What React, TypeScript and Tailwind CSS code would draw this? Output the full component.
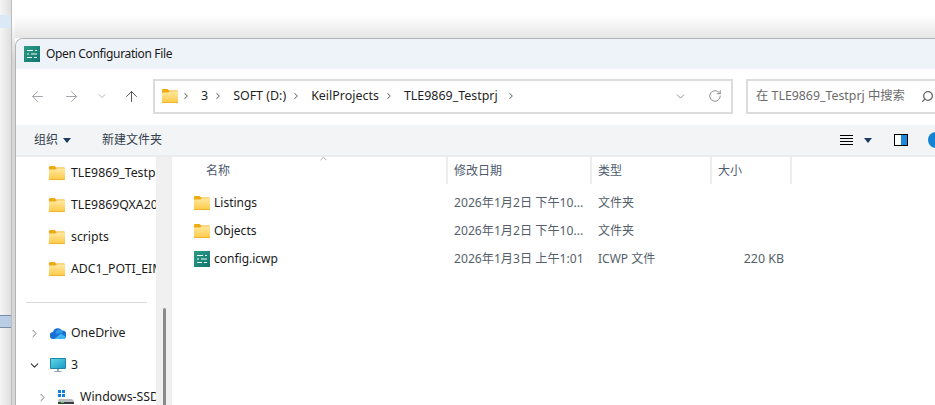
import React from "react";
import { ArrowLeft, ArrowRight, ArrowUp, ChevronDown, ChevronRight, ChevronUp, RotateCw, Search } from "lucide-react";

const font = "font-['Noto_Sans','Noto_Sans_CJK_SC',sans-serif]";

function Folder() {
  return (
    <svg width="16" height="14" viewBox="0 0 16 14" className="shrink-0">
      <defs>
        <linearGradient id="folderBody" x1="0" y1="0" x2="0" y2="1">
          <stop offset="0" stopColor="#ffe9a3" />
          <stop offset="1" stopColor="#fcc945" />
        </linearGradient>
      </defs>
      <path d="M0 1a1 1 0 0 1 1-1h4.5l1.7 1.6H15a1 1 0 0 1 1 1V5H0z" fill="#f0ab14" />
      <path d="M0 3.4h6.3l1.6-1.2H16V14H1a1 1 0 0 1-1-1z" fill="url(#folderBody)" />
      <rect x="0" y="13" width="16" height="1" fill="#f2b32a" />
    </svg>
  );
}

function AppIcon({ size = 16 }: { size?: number }) {
  return (
    <svg width={size} height={size} viewBox="0 0 16 16" className="shrink-0">
      <defs>
        <linearGradient id="appBg" x1="0" y1="0" x2="1" y2="1">
          <stop offset="0" stopColor="#2c9c86" />
          <stop offset="1" stopColor="#12756f" />
        </linearGradient>
      </defs>
      <rect width="16" height="16" fill="url(#appBg)" />
      <path d="M3 4.5h6M11 4.5h2M3 8h2M7 8h6M3 11.5h5M10 11.5h3" stroke="#eef8f5" strokeWidth="1" />
    </svg>
  );
}

function Crumb({ lead = 5 }: { lead?: number }) {
  return (
    <ChevronRight
      size={10}
      strokeWidth={2.5}
      className={`text-[#6f6f6f] shrink-0 mr-[10px] ${lead === 3 ? "ml-[3px]" : lead === 8 ? "ml-[8px]" : "ml-[5px]"}`}
    />
  );
}

function SideFolder({ label }: { label: string }) {
  return (
    <div className="h-8 flex items-center gap-[6px] pl-[33px] whitespace-nowrap overflow-hidden text-[12.3px]">
      <Folder />
      <span>{label}</span>
    </div>
  );
}

function FileRow({ icon, name, date, type, size }: { icon: React.ReactNode; name: string; date: string; type: string; size?: string }) {
  return (
    <div className="h-7 flex items-center whitespace-nowrap">
      <div className="w-[275px] flex items-center gap-1 pl-[19px] text-[#1a1a1a]">
        {icon}
        <span>{name}</span>
      </div>
      <div className="w-[144px] text-[#555f6b] pl-[4px] text-[12.15px]">{date}</div>
      <div className="w-[120px] text-[#555f6b] pl-[4px]">{type}</div>
      <div className="w-[70px] text-right text-[#555f6b] text-[12.4px]">{size}</div>
    </div>
  );
}

function Head({ label, className }: { label: string; className: string }) {
  return (
    <div className={`h-[27px] flex items-center pl-[6px] border-r-2 border-[#ececec] text-[#4d5b6e] ${className}`}>{label}</div>
  );
}

export default function App() {
  return (
    <div className={`${font} w-[935px] h-[405px] overflow-hidden text-[12px] text-[#1a1a1a] flex bg-white`}>
      <div className="w-3 h-full shrink-0 flex flex-col bg-gradient-to-r from-[#f5f5f5] to-[#dfdfdf] border-r border-[#bdbdbd]">
        <div className="h-[15px]" />
        <div className="h-[13px] bg-[#dbe8f5]" />
        <div className="h-[287px]" />
        <div className="h-[13px] bg-[#b9cde4] border-y border-[#7c8ea3]" />
      </div>
      <div className="w-[3px] h-full shrink-0 bg-gradient-to-b from-white from-[5%] to-[#d6d6d6] to-[15%]" />
      <div className="flex-1 min-w-0 flex flex-col">
        <div className="h-[38px] shrink-0 bg-gradient-to-b from-white from-[40%] to-[#e6e6e6]" />
        <div className="flex-1 min-h-0 rounded-tl-lg border-l border-t border-[#b4b4b4] bg-white overflow-hidden flex flex-col">
          <div className="h-[30px] shrink-0 bg-[#eef3fa] flex items-center pl-2 gap-[6px] tracking-[-0.35px]">
            <AppIcon />
            <span>Open Configuration File</span>
          </div>

          <div className="h-[56px] shrink-0 flex items-center pl-[13px] pb-[2px]">
            <div className="flex items-center w-[110px] shrink-0 text-[#a2a6aa]">
              <ArrowLeft size={17} strokeWidth={1.4} className="shrink-0" />
              <ArrowRight size={17} strokeWidth={1.4} className="ml-[17px] shrink-0" />
              <ChevronDown size={12} strokeWidth={1.6} className="ml-[16px] shrink-0" />
              <ArrowUp size={17} strokeWidth={1.4} className="ml-[15px] shrink-0 text-[#555]" />
            </div>
            <div className="w-[580px] ml-[14px] shrink-0 h-[35px] border-2 border-[#dcdcdc] flex items-center pl-[7px] pr-[9px] text-[12.45px] text-[#1f1f1f] whitespace-nowrap">
              <Folder />
              <Crumb lead={3} />
              <span>3</span>
              <Crumb />
              <span>SOFT (D:)</span>
              <Crumb />
              <span>KeilProjects</span>
              <Crumb />
              <span>TLE9869_Testprj</span>
              <Crumb lead={8} />
              <ChevronDown size={13} strokeWidth={1.4} className="ml-auto mr-[21px] text-[#6f6f6f]" />
              <RotateCw size={14} strokeWidth={1.4} className="text-[#777]" />
            </div>
            <div className="flex-1 min-w-0 ml-[13px] h-[35px] border-y-2 border-l-2 border-[#dcdcdc] flex items-center pl-[8px] text-[12.35px] text-[#6b6b6b] gap-[16px] whitespace-nowrap overflow-hidden">
              <span>在 TLE9869_Testprj 中搜索</span>
              <Search size={13} strokeWidth={2.4} className="text-[#666] -scale-x-100 shrink-0" />
            </div>
          </div>

          <div className="h-[32px] shrink-0 bg-[#f3f4f6] border-b-2 border-[#ececec] flex items-center pl-[18px] text-[#333f4f]">
            <span>组织</span>
            <span className="ml-[5px] w-0 h-0 border-x-[4px] border-x-transparent border-t-[5px] border-t-[#1f3a63]" />
            <span className="ml-[31px]">新建文件夹</span>
            <div className="ml-auto flex items-center">
              <div className="w-[13px] flex flex-col gap-[2px]">
                <div className="h-px bg-black" />
                <div className="h-px bg-black" />
                <div className="h-px bg-black" />
                <div className="h-px bg-black" />
              </div>
              <span className="ml-[11px] w-0 h-0 border-x-[4px] border-x-transparent border-t-[5px] border-t-[#1f3a63]" />
              <div className="ml-[22px] w-[14px] h-3 border border-black bg-gradient-to-r from-white from-50% to-[#1e88d8] to-50%" />
              <div className="ml-[20px] w-4 h-4 rounded-full bg-[#1383d8] -mr-[9px] shrink-0" />
            </div>
          </div>

          <div className="flex-1 min-h-0 flex">
            <div className="w-[140px] shrink-0 overflow-hidden">
              <SideFolder label="TLE9869_Testprj" />
              <SideFolder label="TLE9869QXA20_Project" />
              <SideFolder label="scripts" />
              <SideFolder label="ADC1_POTI_EIM_Test" />
              <div className="h-px bg-[#d9d9d9] ml-[10px] mr-[9px] mt-[17px]" />
              <div className="h-8 mt-[14px] flex items-center pl-[12px] whitespace-nowrap text-[12.3px]">
                <ChevronRight size={13} strokeWidth={1.8} className="text-[#777] shrink-0" />
                <svg width="16" height="11" viewBox="0 0 16 11" className="ml-[9px] shrink-0">
                  <path d="M3.5 11a3.5 3.5 0 0 1-.5-7 5 5 0 0 1 9-1.5A4.2 4.2 0 0 1 13 11z" fill="#1a6fd6" />
                  <path d="M5.5 6a4 4 0 0 1 6.5-3.5A4.2 4.2 0 0 1 13 4.5z" fill="#2e9be8" />
                  <path d="M4 11l7-5.5 5 3.5a2.5 2.5 0 0 1-3 2z" fill="#3fb4f2" />
                </svg>
                <span className="ml-[5px]">OneDrive</span>
              </div>
              <div className="h-8 flex items-center pl-[12px] whitespace-nowrap text-[12.3px]">
                <ChevronDown size={13} strokeWidth={2} className="text-[#333] shrink-0" />
                <svg width="16" height="16" viewBox="0 0 16 16" className="ml-[9px] shrink-0">
                  <defs>
                    <linearGradient id="screen" x1="0" y1="0" x2="1" y2="1">
                      <stop offset="0" stopColor="#5fd6e6" />
                      <stop offset="1" stopColor="#1b9cc4" />
                    </linearGradient>
                  </defs>
                  <rect x="0" y="1" width="16" height="11" rx="1" fill="#1f86a8" />
                  <rect x="1" y="2" width="14" height="9" fill="url(#screen)" />
                  <path d="M7 12h2v2h2.5v1h-7v-1H7z" fill="#9aa4ab" />
                </svg>
                <span className="ml-[5px]">3</span>
              </div>
              <div className="h-8 flex items-center pl-[20px] whitespace-nowrap text-[12.3px]">
                <ChevronRight size={13} strokeWidth={1.8} className="text-[#777] shrink-0" />
                <svg width="16" height="14" viewBox="0 0 16 14" className="ml-[9px] shrink-0">
                  <rect x="0" y="0" width="3" height="3" fill="#0f7fdc" />
                  <rect x="4" y="0" width="3" height="3" fill="#0f7fdc" />
                  <rect x="0" y="4" width="3" height="3" fill="#0f7fdc" />
                  <rect x="4" y="4" width="3" height="3" fill="#0f7fdc" />
                  <path d="M1 9h13l2 2v3H0v-3z" fill="#b9bdc2" />
                  <rect x="0" y="12" width="16" height="2" fill="#3b3f44" />
                  <rect x="3" y="12" width="3" height="1" fill="#3fd13f" />
                </svg>
                <span className="ml-[6px]">Windows-SSD</span>
              </div>
            </div>

            <div className="w-4 shrink-0 bg-[#f0f0f0] flex flex-col items-center">
              <div className="h-[151px]" />
              <div className="w-[3px] flex-1 bg-[#8a8a8a] rounded-t-sm" />
            </div>

            <div className="flex-1 min-w-0 pl-[3px] overflow-hidden">
              <div className="relative flex h-[27px]">
                <ChevronUp size={11} strokeWidth={1.5} className="absolute left-[143px] -top-[4px] text-[#888]" />
                <Head label="名称" className="w-[273px] pl-[31px]" />
                <Head label="修改日期" className="w-[144px]" />
                <Head label="类型" className="w-[120px]" />
                <Head label="大小" className="w-[80px]" />
              </div>
              <div className="mt-[5px]">
                <FileRow icon={<Folder />} name="Listings" date="2026年1月2日 下午10..." type="文件夹" />
                <FileRow icon={<Folder />} name="Objects" date="2026年1月2日 下午10..." type="文件夹" />
                <FileRow icon={<AppIcon />} name="config.icwp" date="2026年1月3日 上午1:01" type="ICWP 文件" size="220 KB" />
              </div>
            </div>
          </div>
        </div>
      </div>
    </div>
  );
}
